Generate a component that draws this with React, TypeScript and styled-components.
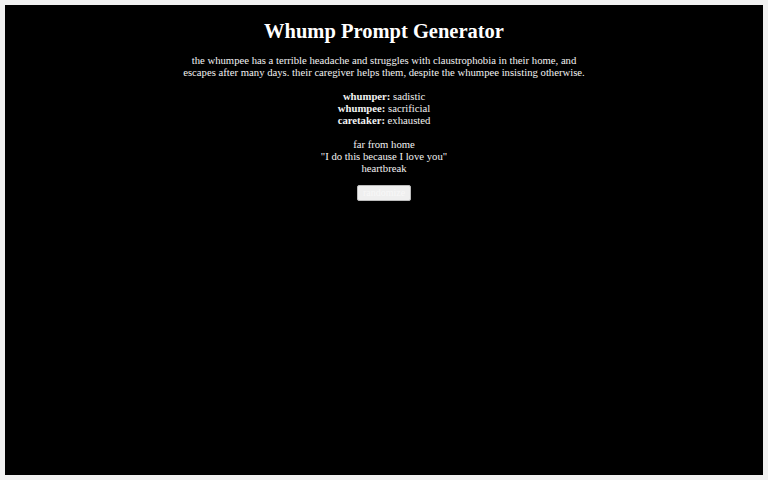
import React, { useState } from 'react';
import styled, { createGlobalStyle } from 'styled-components';

const GlobalStyle = createGlobalStyle`
  html, body {
    margin: 0;
    padding: 0;
  }
  body {
    background: #f1f1f1;
    padding: 5px;
    font-family: "Liberation Serif", "Times New Roman", serif;
  }
`;

const Page = styled.div`
  background: #000;
  color: #f2f2f2;
  height: calc(100vh - 10px);
  box-sizing: border-box;
  padding-top: 14px;
  text-align: center;
`;

const Title = styled.h1`
  margin: 0 0 11px;
  font-size: 20.5px;
  line-height: 24px;
  font-weight: bold;
  color: #fff;
`;

const Block = styled.div<{ $last?: boolean }>`
  font-size: 10.7px;
  line-height: 12px;
  margin-bottom: ${(p) => (p.$last ? 0 : 12)}px;
`;

const Prompt = styled(Block)`
  max-width: 404px;
  margin-left: auto;
  margin-right: auto;
`;

const Label = styled.b`
  font-weight: bold;
`;

const Button = styled.button`
  display: block;
  margin: 11px auto 0;
  width: 54px;
  height: 16px;
  font-family: "Liberation Serif", "Times New Roman", serif;
  font-size: 10px;
  line-height: 12px;
  color: #f8f8f8;
  background: #efefef;
  border: 1px solid #bbb;
  border-radius: 2px;
  padding: 0 4px;
`;

const roles = [
  ['whumper', 'sadistic'],
  ['whumpee', 'sacrificial'],
  ['caretaker', 'exhausted'],
];

const tropes = ['far from home', '"I do this because I love you"', 'heartbreak'];

export default function App() {
  const [seed, setSeed] = useState(0);
  return (
    <>
      <GlobalStyle />
      <Page>
        <Title>Whump Prompt Generator</Title>
        <Prompt>
          the whumpee has a terrible headache and struggles with claustrophobia in their home, and
          escapes after many days. their caregiver helps them, despite the whumpee insisting otherwise.
        </Prompt>
        <Block>
          {roles.map(([role, trait]) => (
            <div key={role}>
              <Label>{role}:</Label> {trait}
            </div>
          ))}
        </Block>
        <Block $last>
          {tropes.map((t) => (
            <div key={t}>{t}</div>
          ))}
        </Block>
        <Button onClick={() => setSeed(seed + 1)}>randomize</Button>
      </Page>
    </>
  );
}
